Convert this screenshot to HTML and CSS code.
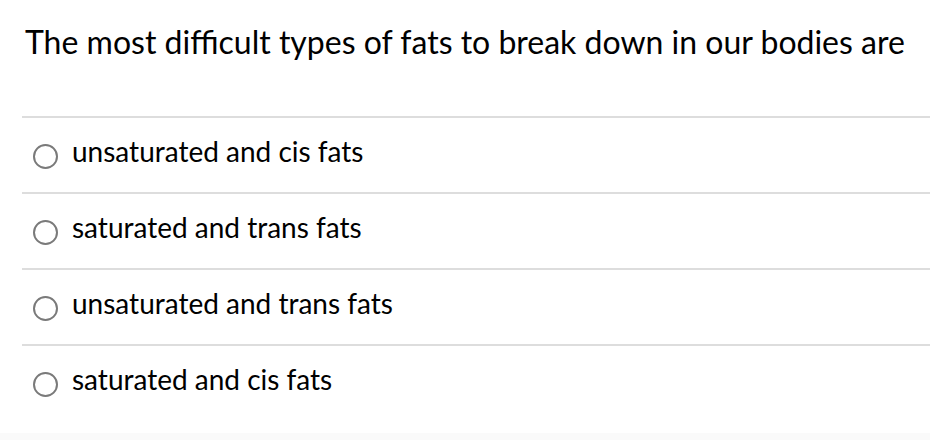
FILE: index.html
```html
<!DOCTYPE html>
<html lang="en">
<head>
<meta charset="utf-8">
<title>Question</title>
<link rel="stylesheet" href="styles.css">
</head>
<body>
<main class="question">
  <h1 class="prompt">The most difficult types of fats to break down in our bodies are</h1>
  <ul class="options">
    <li class="option"><span class="radio"></span><span class="label">unsaturated and cis fats</span></li>
    <li class="option"><span class="radio"></span><span class="label">saturated and trans fats</span></li>
    <li class="option"><span class="radio"></span><span class="label">unsaturated and trans fats</span></li>
    <li class="option"><span class="radio"></span><span class="label">saturated and cis fats</span></li>
  </ul>
</main>
</body>
</html>
```
FILE: styles.css
```css
html, body {
  margin: 0;
  padding: 0;
}
body {
  background: #fafafa;
  font-family: Lato, "Open Sans", Arial, sans-serif;
  color: #000;
}
.question {
  background: #fff;
  height: 433px;
  padding: 0 0 0 22px;
  box-sizing: border-box;
  overflow: hidden;
}
.prompt {
  margin: 0;
  padding: 23px 0 0 3px;
  font-size: 32px;
  font-weight: 400;
  line-height: 38px;
  height: 116px;
  box-sizing: border-box;
}
.options {
  list-style: none;
  margin: 0;
  padding: 0;
}
.option {
  border-top: 2px solid #dddddd;
  height: 76px;
  box-sizing: border-box;
  padding-top: 16px;
  display: flex;
  align-items: flex-start;
}
.radio {
  width: 25px;
  height: 25px;
  box-sizing: border-box;
  border: 2px solid #7a7a7a;
  border-radius: 50%;
  margin: 10px 0 0 11px;
  flex: none;
}
.label {
  margin-left: 14px;
  font-size: 28px;
  line-height: 34px;
}
```
